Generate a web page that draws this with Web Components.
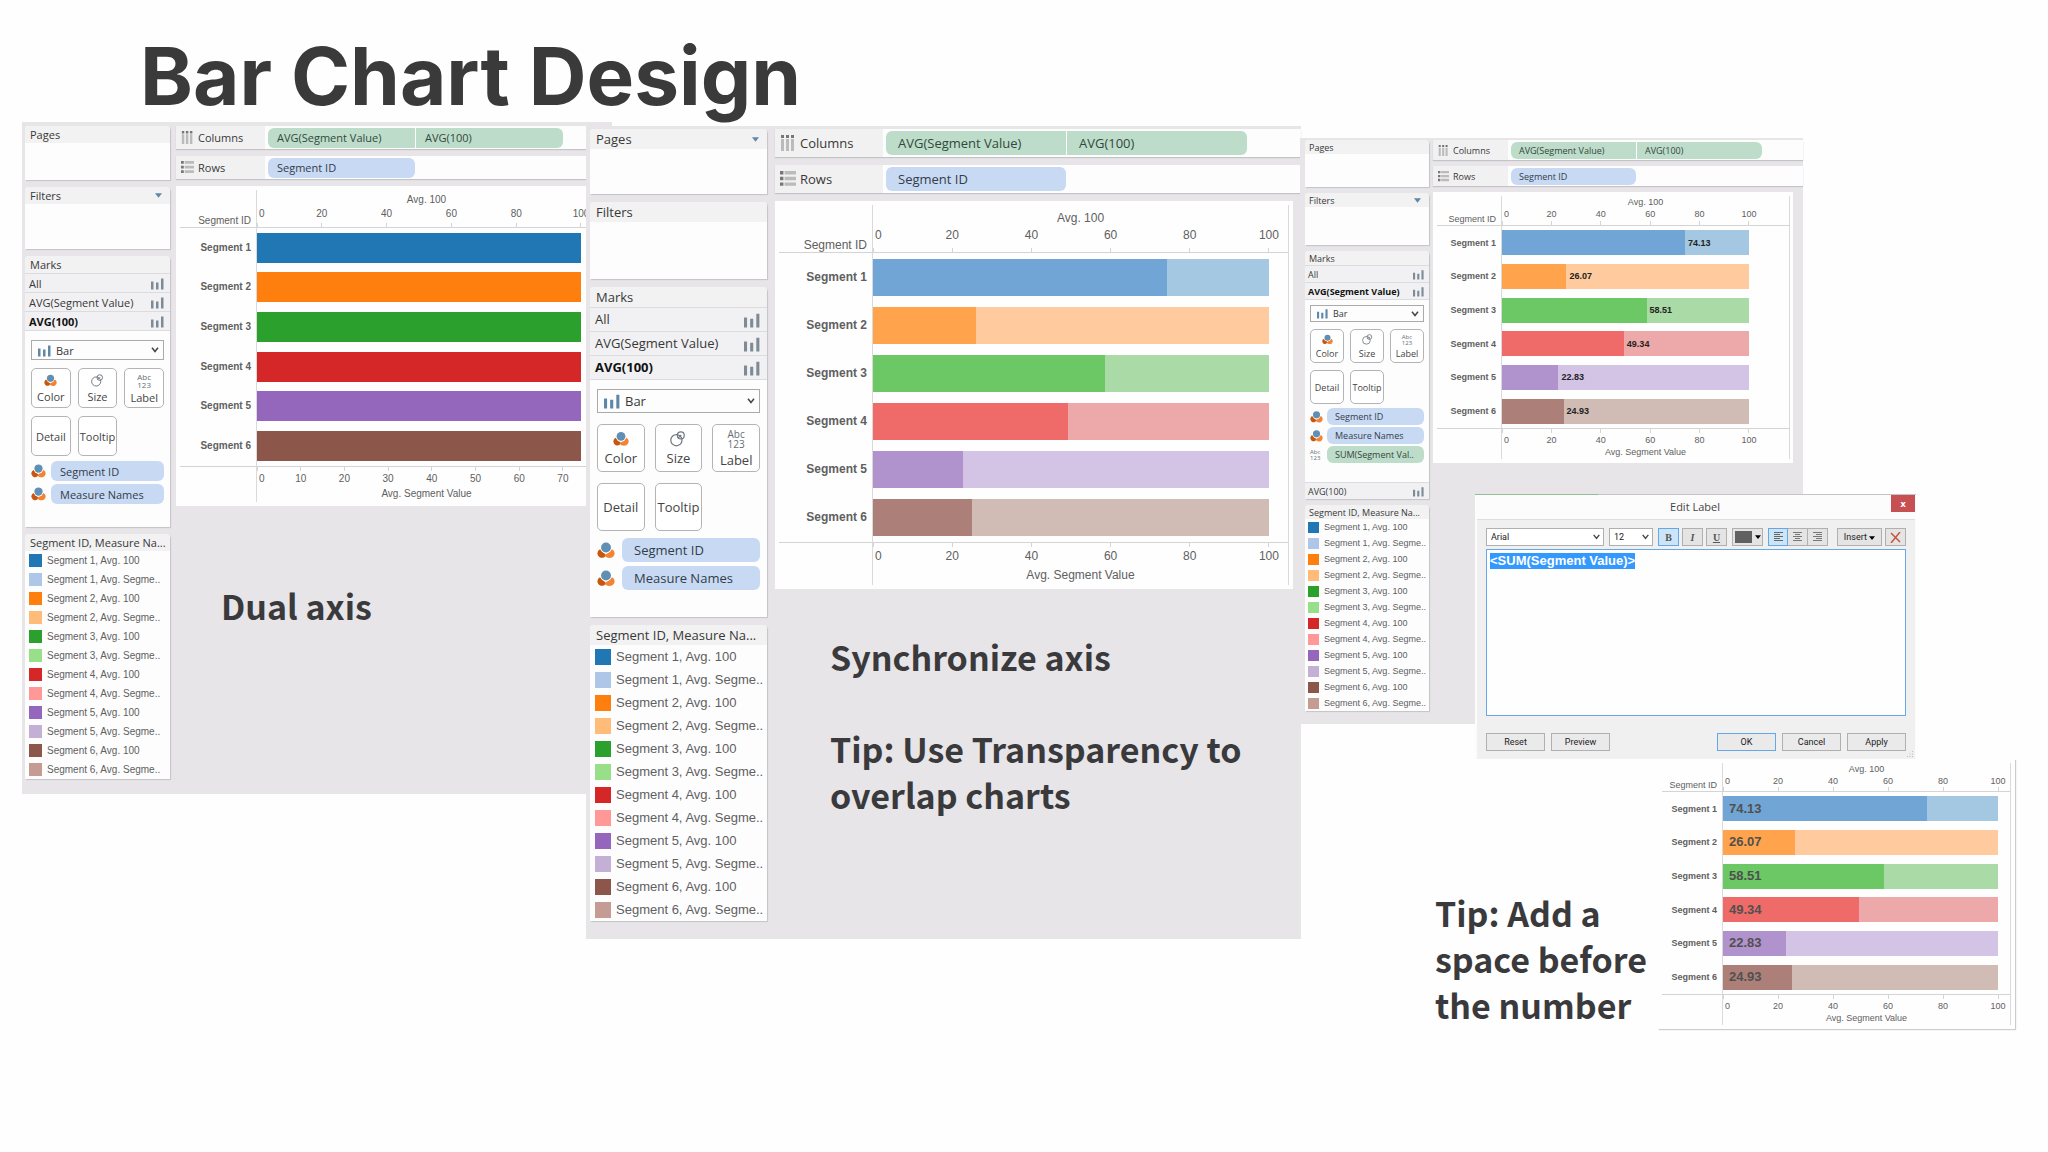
<!DOCTYPE html>
<html lang="en">
<head>
<meta charset="utf-8">
<title>Bar Chart Design</title>
<style>
    body {
        margin: 0;
        background: #fefefe;
        font-family: "Open Sans", "Noto Sans", sans-serif;
        color: #383838;
    }

    /* three zoom levels of the same workbook */
    .medium {
        --ui: 11px; --legend: 10px; --axis: 10px;
        --side: 145px; --gap: 7px; --side-gap: 6px; --top: 4px; --left: 3px; --bottom: 15px;
        --head: 17px; --row: 19px; --pages: 54px; --filters: 62px; --marks: 271px;
        --pad: 6px; --inset: 4px; --body-top: 9px; --after-select: 8px; --control: 20px; --tile: 40px; --tile-gap: 7px;
        --before-pills: 5px; --pill-gap: 3px; --pill-icon: 20px; --pill-pad: 9px;
        --item: 19px; --swatch: 13px; --swatch-h: 13px;
        --shelf: 23px; --shelf-head: 91px; --pill-w: 147px;
        --label-col: 80px; --plot-right: 15px; --edge: 0px; --chart-right: 15px;
        --line: 14px; --chart-top: 7px; --tick-gap: 2px; --plot: 240px; --bar: 30px; --foot-gap: 1px;
    }

    .large {
        --ui: 13px; --legend: 13px; --axis: 12px;
        --side: 177px; --gap: 8px; --side-gap: 8px; --top: 3px; --left: 4px; --bottom: 18px;
        --head: 20px; --row: 24px; --pages: 65px; --filters: 77px; --marks: 330px;
        --pad: 7px; --inset: 5px; --body-top: 9px; --after-select: 11px; --control: 24px; --tile: 48px; --tile-gap: 10px;
        --before-pills: 7px; --pill-gap: 4px; --pill-icon: 25px; --pill-pad: 12px;
        --item: 23px; --swatch: 16px; --swatch-h: 16px;
        --shelf: 28px; --shelf-head: 110px; --pill-w: 180px;
        --label-col: 97px; --plot-right: 19px; --edge: 4px; --chart-right: 8px;
        --line: 17px; --chart-top: 9px; --tick-gap: 4px; --plot: 291px; --bar: 37px; --foot-gap: 2px;
    }

    .small {
        --ui: 9px; --legend: 9px; --axis: 9px;
        --side: 124px; --gap: 6px; --side-gap: 4px; --top: 2px; --left: 5px; --bottom: 13px;
        --head: 14px; --row: 17px; --pages: 47px; --filters: 52px; --marks: 248px;
        --pad: 5px; --inset: 3px; --body-top: 5px; --after-select: 7px; --control: 17px; --tile: 34px; --tile-gap: 6px;
        --before-pills: 4px; --pill-gap: 2px; --pill-icon: 17px; --pill-pad: 8px;
        --item: 16px; --swatch: 11px; --swatch-h: 11px;
        --shelf: 20px; --shelf-head: 77px; --pill-w: 125px;
        --label-col: 68px; --plot-right: 40px; --edge: 3px; --chart-right: 10px;
        --line: 12px; --chart-top: 4px; --tick-gap: 1px; --plot: 204px; --bar: 25px; --foot-gap: 0px;
    }

    .result {
        --label-col: 64px; --plot-right: 12px; --edge: 4px; --chart-right: 0px; --tick-gap: 0px; --value: 13px;
    }

    /* screenshots lie freely on the slide and overlap */
    chart-slide > * { position: absolute; }
    h1 {
        left: 140px; top: 26px;
        margin: 0;
        font: 700 80px/100px Inter, sans-serif;
        color: #3a3a3b;
        white-space: nowrap;
    }
    #dual { left: 22px; top: 122px; width: 590px; }
    #sync { left: 586px; top: 126px; width: 715px; }
    #labels { left: 1300px; top: 138px; width: 503px; }
    #result { left: 1658px; top: 759px; width: 357px; }
    #dialog { left: 1475px; top: 494px; width: 441px; }
    #note-dual { left: 221px; top: 583px; }
    #note-sync { left: 830px; top: 634px; width: 440px; }
    #note-space { left: 1435px; top: 890px; width: 225px; }
</style>
</head>
<body>
<chart-slide>
    <h1>Bar Chart Design</h1>

    <work-sheet id="dual" class="medium" filter-arrow>
        <marks-card slot="marks" active="AVG(100)"></marks-card>
        <bar-chart solid></bar-chart>
    </work-sheet>
    <slide-note id="note-dual"><p>Dual axis</p></slide-note>

    <work-sheet id="sync" class="large" pages-arrow>
        <marks-card slot="marks" active="AVG(100)"></marks-card>
        <bar-chart></bar-chart>
    </work-sheet>
    <slide-note id="note-sync">
        <p>Synchronize axis</p>
        <p>Tip: Use Transparency to overlap charts</p>
    </slide-note>

    <work-sheet id="labels" class="small" filter-arrow>
        <marks-card slot="marks" active="AVG(Segment Value)" with-label></marks-card>
        <bar-chart values="end"></bar-chart>
    </work-sheet>

    <bar-chart id="result" class="small result" values="start" framed></bar-chart>
    <label-dialog id="dialog"></label-dialog>
    <slide-note id="note-space"><p>Tip: Add a space before the number</p></slide-note>
</chart-slide>

<script>
const segments = [
    { name: 'Segment 1', value: 74.13, solid: '#2077b4', pale: '#aec7e8', front: '#71a5d5', back: '#a4c8e1' },
    { name: 'Segment 2', value: 26.07, solid: '#ff7f0e', pale: '#ffbb78', front: '#ffa34d', back: '#ffcb9e' },
    { name: 'Segment 3', value: 58.51, solid: '#2ca02c', pale: '#98df8a', front: '#6bc865', back: '#aadaa6' },
    { name: 'Segment 4', value: 49.34, solid: '#d62728', pale: '#ff9896', front: '#ef6b69', back: '#eda9a9' },
    { name: 'Segment 5', value: 22.83, solid: '#9467bd', pale: '#c5b0d5', front: '#b092cc', back: '#d3c3e4' },
    { name: 'Segment 6', value: 24.93, solid: '#8c564b', pale: '#c49c94', front: '#ac7f78', back: '#d0bcb4' }
];

const icons = {
    bars: `<svg viewBox="0 0 13 12" fill="currentColor"><path d="M0 4h2.500v8H0zM5 5h2.500v7H5zM10 1h2.500v11h-2.500z"/></svg>`,
    color: `<svg viewBox="0 0 20 18"><path d="M3.500 7.500C-.5 9.500-.3 14.500 3 16.500c3 1.700 6 0 7-2.500z" fill="#c8560f"/><path d="M16.500 7.500c4 2 3.800 7 .5 9-3 1.700-7.500.5-8.500-2z" fill="#f58231"/><circle cx="10" cy="6" r="6.400" fill="#fff"/><circle cx="10" cy="5.700" r="5.500" fill="#5f8fb4"/></svg>`,
    size: `<svg viewBox="0 0 20 20" fill="none" stroke="#707780" stroke-width="1.500"><circle cx="8" cy="11.500" r="7"/><circle cx="13.500" cy="5.500" r="4.300"/><path d="M10 9l4-4"/></svg>`,
    columns: `<svg viewBox="0 0 14 16"><path d="M0 0h3v3H0zM5 0h3v3H5zM10 0h3v3h-3z" fill="#777"/><path d="M0 4h3v12H0zM5 4h3v12H5zM10 4h3v12h-3z" fill="#bbb"/></svg>`,
    rows: `<svg viewBox="0 0 14 14"><path d="M0 0h3v3H0zM0 5h3v3H0zM0 10h3v3H0z" fill="#777"/><path d="M4 0h10v3H4zM4 5h10v3H4zM4 10h10v3H4z" fill="#bbb"/></svg>`,
    chevron: `<svg viewBox="0 0 10 8" fill="none" stroke="#444" stroke-width="2"><path d="M1 1l4 5 4-5"/></svg>`,
    triangle: `<svg viewBox="0 0 8 5" fill="#5f87a6"><path d="M0 0h8L4 5z"/></svg>`
};

class ChartSlide extends HTMLElement {
    constructor() {
        super();
        this.attachShadow({ mode: 'open' });
        this.shadowRoot.innerHTML = `
            <style>
                :host { display: block; position: relative; min-height: 100vh; overflow: hidden; }
            </style>
            <slot></slot>
        `;
    }
}

class SlideNote extends HTMLElement {
    constructor() {
        super();
        this.attachShadow({ mode: 'open' });
        this.shadowRoot.innerHTML = `
            <style>
                :host {
                    display: flex;
                    flex-direction: column;
                    gap: 46px;
                    font: 700 34px/46px "Noto Sans CJK SC", sans-serif;
                    color: #3a3a3d;
                }
                ::slotted(p) { margin: 0; }
            </style>
            <slot></slot>
        `;
    }
}

class FieldPill extends HTMLElement {
    constructor() {
        super();
        this.attachShadow({ mode: 'open' });
        this.shadowRoot.innerHTML = `
            <style>
                :host {
                    display: flex;
                    align-items: center;
                    box-sizing: border-box;
                    height: var(--control);
                    padding-left: var(--pill-pad);
                    border-radius: 6px;
                    background: #c8daf3;
                    font-size: var(--ui);
                    color: #333c4a;
                    white-space: nowrap;
                    overflow: hidden;
                }
                :host([measure]) { background: #bddcca; color: #33483c; }
                :host([join="left"]) { border-radius: 6px 0 0 6px; }
                :host([join="right"]) { border-radius: 0 6px 6px 0; }
            </style>
            <slot></slot>
        `;
    }
}

class ShelfCard extends HTMLElement {
    constructor() {
        super();
        this.attachShadow({ mode: 'open' });
    }

    connectedCallback() {
        this.shadowRoot.innerHTML = `
            <style>
                :host {
                    display: flex;
                    flex-direction: column;
                    box-sizing: border-box;
                    background: #fdfdfe;
                    border-radius: 4px 4px 0 0;
                    box-shadow: 1px 1px 1px #c4c4c6;
                    font-size: var(--ui);
                }
                header {
                    display: flex;
                    align-items: center;
                    justify-content: space-between;
                    height: var(--head);
                    padding: 0 8px 0 var(--inset);
                    background: #f2f2f2;
                    border-radius: 4px 4px 0 0;
                    line-height: 1;
                    text-indent: 1px;
                    white-space: nowrap;
                }
                header svg { width: 7px; height: 5px; }
            </style>
            <header>${this.getAttribute('label')}${this.hasAttribute('arrow') ? icons.triangle : ''}</header>
            <slot></slot>
        `;
    }
}

class MarksCard extends HTMLElement {
    constructor() {
        super();
        this.attachShadow({ mode: 'open' });
    }

    layer(name) {
        const active = name === this.getAttribute('active') ? ' class="layer active"' : ' class="layer"';
        return `<div${active}><span>${name}</span>${icons.bars}</div>`;
    }

    connectedCallback() {
        const withLabel = this.hasAttribute('with-label');
        const layers = withLabel ? ['All', 'AVG(Segment Value)'] : ['All', 'AVG(Segment Value)', 'AVG(100)'];
        this.shadowRoot.innerHTML = `
            <style>
                :host { display: block; }
                shelf-card { height: var(--marks); }
                .layer {
                    display: flex;
                    align-items: center;
                    justify-content: space-between;
                    box-sizing: border-box;
                    height: var(--row);
                    padding: 0 var(--pad) 0 var(--inset);
                    border-top: 1px solid #dcdcde;
                    background: #f1f1f3;
                    line-height: 1;
                    white-space: nowrap;
                }
                .layer svg { width: var(--swatch); height: var(--swatch-h); color: #7e8b96; }
                .active { font-weight: 700; color: #111; }
                .body {
                    flex: 1;
                    padding: var(--body-top) var(--pad) 0;
                    border-top: 1px solid #dcdcde;
                }
                .select {
                    display: grid;
                    grid-template-columns: auto 1fr auto;
                    align-items: center;
                    gap: 5px;
                    box-sizing: border-box;
                    height: var(--control);
                    padding: 0 4px 0 6px;
                    border: 1px solid #aaa;
                    margin-bottom: var(--after-select);
                }
                .select svg:first-child { width: var(--swatch); height: var(--swatch-h); color: #5f87a6; }
                .select svg:last-child { width: 8px; height: 6px; }
                select {
                    appearance: none;
                    border: 0;
                    padding: 0;
                    background: none;
                    font: inherit;
                    color: inherit;
                }
                .tiles {
                    display: grid;
                    grid-template-columns: repeat(3, 1fr);
                    gap: var(--after-select) var(--tile-gap);
                    margin-bottom: var(--before-pills);
                }
                button {
                    display: flex;
                    flex-direction: column;
                    align-items: center;
                    justify-content: space-evenly;
                    height: var(--tile);
                    min-width: 0;
                    padding: 0;
                    border: 1px solid #b4b4b6;
                    border-radius: 5px;
                    background: #fff;
                    font: inherit;
                    line-height: 1;
                    color: #444;
                }
                button svg { width: var(--swatch); height: var(--swatch-h); }
                .abc {
                    display: flex;
                    flex-direction: column;
                    align-items: center;
                    font-size: calc(var(--ui) - 3px);
                    line-height: 1;
                    color: #666d76;
                }
                .field {
                    display: grid;
                    grid-template-columns: var(--pill-icon) 1fr;
                    align-items: center;
                    margin-bottom: var(--pill-gap);
                }
                .field svg { width: calc(var(--swatch) + 2px); height: calc(var(--swatch-h) + 1px); }
                .field .abc { justify-self: start; }
            </style>
            <shelf-card label="Marks">
                ${layers.map(name => this.layer(name)).join('')}
                <div class="body">
                    <label class="select" aria-label="Mark type">
                        ${icons.bars}<select><option>Bar</option></select>${icons.chevron}
                    </label>
                    <div class="tiles">
                        <button>${icons.color}Color</button>
                        <button>${icons.size}Size</button>
                        <button><span class="abc"><span>Abc</span><span>123</span></span>Label</button>
                        <button>Detail</button>
                        <button>Tooltip</button>
                    </div>
                    <div class="field">${icons.color}<field-pill>Segment ID</field-pill></div>
                    <div class="field">${icons.color}<field-pill>Measure Names</field-pill></div>
                    ${withLabel ? `<div class="field"><span class="abc"><span>Abc</span><span>123</span></span><field-pill measure>SUM(Segment Val..</field-pill></div>` : ''}
                </div>
                ${withLabel ? this.layer('AVG(100)') : ''}
            </shelf-card>
        `;
    }
}

class ColorLegend extends HTMLElement {
    constructor() {
        super();
        this.attachShadow({ mode: 'open' });
        const items = segments.map(s => `
            <li><i style="background:${s.solid}"></i>${s.name}, Avg. 100</li>
            <li><i style="background:${s.pale}"></i>${s.name}, Avg. Segme..</li>`).join('');
        this.shadowRoot.innerHTML = `
            <style>
                :host { display: block; }
                ul { margin: 0; padding: 0; list-style: none; }
                li {
                    display: flex;
                    align-items: center;
                    gap: 5px;
                    height: var(--item);
                    padding-left: var(--inset);
                    font: var(--legend) "Liberation Sans", sans-serif;
                    color: #606060;
                    white-space: nowrap;
                }
                i { width: var(--swatch); height: var(--swatch-h); }
            </style>
            <shelf-card label="Segment ID, Measure Na..."><ul>${items}</ul></shelf-card>
        `;
    }
}

class FieldShelf extends HTMLElement {
    constructor() {
        super();
        this.attachShadow({ mode: 'open' });
    }

    connectedCallback() {
        const label = this.getAttribute('label');
        this.shadowRoot.innerHTML = `
            <style>
                :host {
                    display: flex;
                    align-items: center;
                    gap: 1px;
                    height: var(--shelf);
                    background: #fdfdfe;
                    box-shadow: 0 1px 1px #c4c4c6;
                    font-size: var(--ui);
                }
                .head {
                    display: flex;
                    align-items: center;
                    gap: 4px;
                    box-sizing: border-box;
                    flex: none;
                    width: var(--shelf-head);
                    height: 100%;
                    padding-left: 5px;
                    border-right: 2px solid #fdfdfe;
                    background: #f2f1f2;
                }
                svg { width: var(--swatch); height: var(--swatch-h); }
                ::slotted(field-pill) { width: var(--pill-w); }
            </style>
            <span class="head">${icons[label.toLowerCase()]}${label}</span>
            <slot></slot>
        `;
    }
}

class BarChart extends HTMLElement {
    constructor() {
        super();
        this.attachShadow({ mode: 'open' });
    }

    axis(step, max, span) {
        const ticks = [];
        for (let t = 0; t <= max; t += step) ticks.push(`<span>${t}</span>`);
        return `<div class="scale"><div class="axis" style="width:${max / span * 100}%">${ticks.join('')}</div></div>`;
    }

    bar(s) {
        if (this.hasAttribute('solid')) return `<div class="bar" style="background:${s.solid}"></div>`;
        const value = `<b>${s.value}</b>`;
        const mode = this.getAttribute('values');
        return `<div class="bar" style="background:${s.back}">
            <div class="front" style="background:${s.front};width:${s.value}%">${mode === 'start' ? value : ''}</div>
            ${mode === 'end' ? value : ''}
        </div>`;
    }

    connectedCallback() {
        const solid = this.hasAttribute('solid');
        this.shadowRoot.innerHTML = `
            <style>
                :host {
                    display: grid;
                    grid-template-columns: var(--label-col) 1fr;
                    box-sizing: border-box;
                    margin-right: var(--chart-right);
                    padding: 4px var(--edge) 4px 0;
                    background: #fefefe;
                    font: var(--axis)/var(--line) "Liberation Sans", sans-serif;
                    color: #606060;
                }
                :host([framed]) { box-shadow: 1px 1px 1px #ccc; }
                .corner {
                    display: flex;
                    align-items: flex-end;
                    justify-content: flex-end;
                    padding: 0 5px 1px 0;
                    line-height: 1;
                }
                .head, .plot, .foot {
                    border-left: 1px solid #dadada;
                    border-right: 1px solid #dadada;
                }
                .head { padding-top: calc(var(--chart-top) - 4px); }
                .foot { padding-bottom: 1px; }
                .foot .title { margin-top: var(--foot-gap); }
                .plot, .scale { padding-right: var(--plot-right); }
                .plot, .names {
                    display: grid;
                    grid-template-rows: repeat(6, 1fr);
                    align-items: center;
                    box-sizing: border-box;
                    height: var(--plot);
                    border-top: 1px solid #d4d4d4;
                    border-bottom: 1px solid #d4d4d4;
                }
                .names {
                    margin-left: 4px;
                    padding-right: 5px;
                    text-align: right;
                    font-weight: 700;
                }
                .title { text-align: center; }
                .axis { display: flex; justify-content: space-between; }
                .axis span {
                    display: flex;
                    flex-direction: column;
                    align-items: center;
                    width: 0;
                }
                .axis span:first-child { align-items: flex-start; text-indent: 2px; }
                .axis span::before, .axis span::after { content: ""; width: 1px; background: #d4d4d4; }
                .head .axis span::after { height: 4px; margin-top: var(--tick-gap); }
                .foot .axis span::before { height: 4px; margin-bottom: 1px; }
                .bar { display: flex; align-items: center; height: var(--bar); }
                .front { display: flex; align-items: center; height: 100%; }
                b { padding-left: 3px; color: #222; }
                .front b { padding-left: 6px; font-size: var(--value); color: #505050; }
            </style>
            <div class="corner">Segment ID</div>
            <div class="head"><div class="title">Avg. 100</div>${this.axis(20, 100, 100)}</div>
            <div class="names">${segments.map(s => `<span>${s.name}</span>`).join('')}</div>
            <div class="plot">${segments.map(s => this.bar(s)).join('')}</div>
            <div></div>
            <div class="foot">
                ${solid ? this.axis(10, 70, 74.13) : this.axis(20, 100, 100)}
                <div class="title">Avg. Segment Value</div>
            </div>
        `;
    }
}

class WorkSheet extends HTMLElement {
    constructor() {
        super();
        this.attachShadow({ mode: 'open' });
    }

    connectedCallback() {
        this.shadowRoot.innerHTML = `
            <style>
                :host {
                    display: grid;
                    grid-template-columns: var(--side) 1fr;
                    gap: var(--side-gap);
                    box-sizing: border-box;
                    padding: var(--top) 0 var(--bottom) var(--left);
                    background: #e7e5e8;
                }
                aside, main { display: flex; flex-direction: column; gap: var(--gap); min-width: 0; }
                .pages { height: var(--pages); }
                .filters { height: var(--filters); }
            </style>
            <aside>
                <shelf-card class="pages" label="Pages" ${this.hasAttribute('pages-arrow') ? 'arrow' : ''}></shelf-card>
                <shelf-card class="filters" label="Filters" ${this.hasAttribute('filter-arrow') ? 'arrow' : ''}></shelf-card>
                <slot name="marks"></slot>
                <color-legend></color-legend>
            </aside>
            <main>
                <field-shelf label="Columns">
                    <field-pill measure join="left">AVG(Segment Value)</field-pill>
                    <field-pill measure join="right">AVG(100)</field-pill>
                </field-shelf>
                <field-shelf label="Rows"><field-pill>Segment ID</field-pill></field-shelf>
                <slot></slot>
            </main>
        `;
    }
}

class LabelDialog extends HTMLElement {
    constructor() {
        super();
        this.attachShadow({ mode: 'open' });
        this.shadowRoot.innerHTML = `
            <style>
                :host {
                    display: block;
                    box-sizing: border-box;
                    padding-top: 1px;
                    background: linear-gradient(to right, #93bd98 28%, #c4c4c6 28%) top / 100% 1px no-repeat #fdfcfd;
                    font: 9px Roboto, sans-serif;
                    color: #222;
                }
                header {
                    display: grid;
                    grid-template-columns: 24px 1fr 24px;
                    height: 24px;
                    padding-right: 1px;
                }
                h2 { grid-column: 2; margin: 0; text-align: center; font: 11px/24px "Open Sans", sans-serif; color: #444; }
                button, select, .pick {
                    box-sizing: border-box;
                    height: 18px;
                    padding: 0;
                    border: 1px solid #b0b0b0;
                    background: #e4e4e4;
                    font: inherit;
                    color: inherit;
                }
                header button {
                    height: 17px;
                    border: 0;
                    background: #c75053;
                    color: #fff;
                    font: 700 9px/9px "Open Sans", sans-serif;
                }
                .body {
                    position: relative;
                    margin: 0 1px 0 2px;
                    padding: 8px 9px 8px;
                    border-top: 1px solid #dedede;
                    background: #f0f0f0;
                }
                .tools { display: flex; gap: 3px; margin-bottom: 3px; }
                .pick {
                    display: flex;
                    align-items: center;
                    justify-content: space-between;
                    padding: 0 3px 0 4px;
                    background: #fff;
                }
                .pick svg { width: 7px; height: 6px; }
                .font { width: 118px; }
                .size { width: 44px; margin: 0 2px; }
                select { appearance: none; flex: 1; min-width: 0; height: 16px; border: 0; background: none; }
                .tool { width: 21px; font: 700 10px "Liberation Serif", serif; color: #555; }
                .on { border-color: #66a7e8; background: #cce4f7; }
                .ink { display: flex; align-items: center; justify-content: space-around; width: 31px; margin: 0 2px; }
                .ink i { width: 17px; height: 12px; background: #606060; }
                .ink svg, .insert svg { width: 6px; height: 4px; }
                .align { display: flex; margin-right: 6px; }
                .align button { width: 20px; border-left-width: 0; }
                .align .on { border-left-width: 1px; }
                .align svg { width: 9px; height: 9px; }
                .insert { flex: 1; white-space: nowrap; }
                .remove svg { width: 11px; height: 11px; vertical-align: middle; }
                textarea {
                    display: block;
                    box-sizing: border-box;
                    width: 100%;
                    height: 167px;
                    padding: 3px;
                    border: 1px solid #66a7e8;
                    outline: 0;
                    resize: none;
                    background: #fefefe;
                    font: 700 13px/16px "Liberation Sans", sans-serif;
                    color: #222;
                }
                textarea::selection { background: #3399ff; color: #fff; }
                footer { display: flex; gap: 6px; margin-top: 17px; }
                footer button { width: 59px; background: #eaeaea; }
                .ok { margin-left: auto; border-color: #66a7e8; }
                .grip { position: absolute; right: 1px; bottom: 1px; width: 7px; height: 7px; }
            </style>
            <header>
                <h2>Edit Label</h2>
                <button aria-label="Close">x</button>
            </header>
            <div class="body">
                <div class="tools">
                    <label class="pick font" aria-label="Font"><select><option>Arial</option></select>${icons.chevron}</label>
                    <label class="pick size" aria-label="Font size"><select><option>12</option></select>${icons.chevron}</label>
                    <button class="tool on">B</button>
                    <button class="tool"><i>I</i></button>
                    <button class="tool"><u>U</u></button>
                    <button class="ink" aria-label="Text color"><i></i><svg viewBox="0 0 8 5"><path d="M0 0h8L4 5z"/></svg></button>
                    <div class="align">
                        <button class="on" aria-label="Align left"><svg viewBox="0 0 9 9" stroke="#666"><path d="M0 .5h9M0 2.500h6M0 4.500h9M0 6.500h6M0 8.500h9"/></svg></button>
                        <button aria-label="Center"><svg viewBox="0 0 9 9" stroke="#777"><path d="M0 .5h9M2 2.500h5M0 4.500h9M2 6.500h5M0 8.500h9"/></svg></button>
                        <button aria-label="Align right"><svg viewBox="0 0 9 9" stroke="#777"><path d="M0 .5h9M3 2.500h6M0 4.500h9M3 6.500h6M0 8.500h9"/></svg></button>
                    </div>
                    <button class="insert">Insert <svg viewBox="0 0 8 5"><path d="M0 0h8L4 5z"/></svg></button>
                    <button class="tool remove" aria-label="Clear"><svg viewBox="0 0 11 11" fill="none" stroke="#c8563c" stroke-width="1.500"><path d="M1 1l9 9M10 0L1 11"/></svg></button>
                </div>
                <textarea aria-label="Label text" spellcheck="false">&lt;SUM(Segment Value)&gt;</textarea>
                <footer>
                    <button>Reset</button>
                    <button>Preview</button>
                    <button class="ok">OK</button>
                    <button>Cancel</button>
                    <button>Apply</button>
                </footer>
                <svg class="grip" viewBox="0 0 7 7" fill="#bbb"><path d="M5 0h1v1h-1zM5 2.500h1v1h-1zM2.500 2.500h1v1h-1zM5 5h1v1h-1zM2.500 5h1v1h-1zM0 5h1v1h-1z"/></svg>
            </div>
        `;
    }

    connectedCallback() {
        const text = this.shadowRoot.querySelector('textarea');
        text.focus();
        text.select();
    }
}

customElements.define('chart-slide', ChartSlide);
customElements.define('slide-note', SlideNote);
customElements.define('field-pill', FieldPill);
customElements.define('shelf-card', ShelfCard);
customElements.define('marks-card', MarksCard);
customElements.define('color-legend', ColorLegend);
customElements.define('field-shelf', FieldShelf);
customElements.define('bar-chart', BarChart);
customElements.define('work-sheet', WorkSheet);
customElements.define('label-dialog', LabelDialog);
</script>
</body>
</html>
